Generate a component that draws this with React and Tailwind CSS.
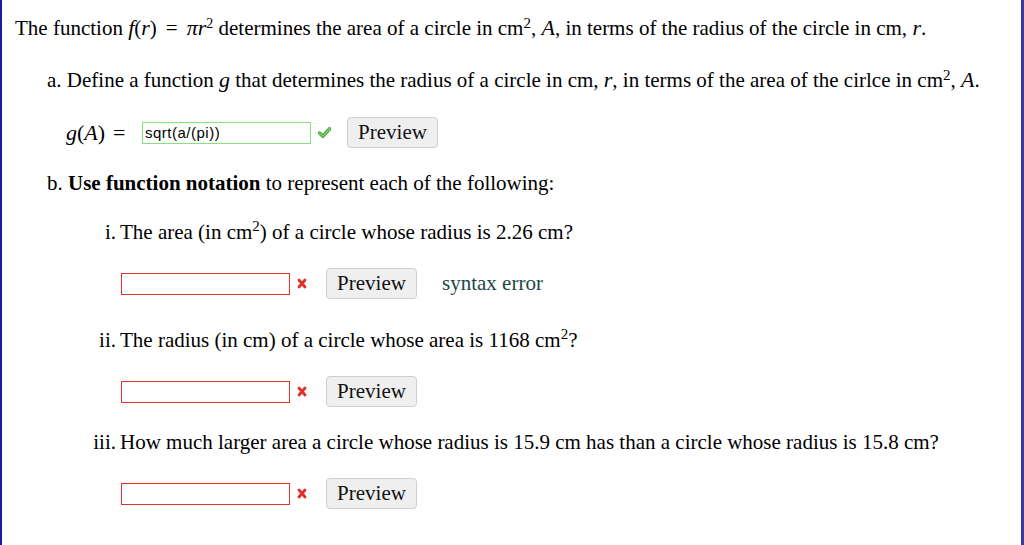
import { useState } from "react";

const serif = { fontFamily: '"Liberation Serif", "Times New Roman", serif' };

function Mi({ children }) {
  return <span className="italic text-[22px]">{children}</span>;
}

function Sup({ children }) {
  return <sup className="text-[15px]">{children}</sup>;
}

function CheckMark() {
  return (
    <svg width="13" height="11" viewBox="0 0 13 11" className="shrink-0">
      <path d="M1.5 6 L5 9.2 L11.5 1.8" fill="none" stroke="#3f8f33" strokeWidth="3.4" strokeLinecap="round" strokeLinejoin="round" />
      <path d="M1.5 6 L5 9.2 L11.5 1.8" fill="none" stroke="#6fd35c" strokeWidth="2" strokeLinecap="round" strokeLinejoin="round" />
    </svg>
  );
}

function CrossMark() {
  return (
    <svg width="10" height="11" viewBox="0 0 10 11" className="shrink-0">
      <path d="M2 2 L8 9 M8 2 L2 9" fill="none" stroke="#e0302a" strokeWidth="2.8" strokeLinecap="round" />
    </svg>
  );
}

function PreviewButton() {
  return (
    <button className="h-[31px] w-[91px] rounded-[4px] border border-[#cfcfcf] bg-[#efefef] text-[21px] text-[#111] leading-none">
      Preview
    </button>
  );
}

function AnswerRow({ ok, value, note }) {
  return (
    <div className="flex items-center h-[31px]">
      <input
        readOnly
        value={value || ""}
        className={
          "h-[22px] w-[169px] px-[2px] text-[15px] tracking-[0.5px] text-black outline-none border " +
          (ok ? "border-[#86e37c]" : "border-[#e3342b]")
        }
        style={{ fontFamily: '"Liberation Sans", Arial, sans-serif' }}
      />
      <div className="w-[36px] flex items-center justify-start pl-[7px]">
        {ok ? <CheckMark /> : <CrossMark />}
      </div>
      <PreviewButton />
      {note && <span className="ml-[25px] text-[#1d4646]">{note}</span>}
    </div>
  );
}

export default function App() {
  const [items] = useState([
    {
      marker: "i.",
      text: (
        <>
          The area (in cm<Sup>2</Sup>) of a circle whose radius is 2.26 cm?
        </>
      ),
      note: "syntax error",
      gap: "mt-0",
    },
    {
      marker: "ii.",
      text: (
        <>
          The radius (in cm) of a circle whose area is 1168 cm<Sup>2</Sup>?
        </>
      ),
      gap: "mt-[30px]",
    },
    {
      marker: "iii.",
      text: <>How much larger area a circle whose radius is 15.9 cm has than a circle whose radius is 15.8 cm?</>,
      gap: "mt-[24px]",
    },
  ]);

  return (
    <div
      className="w-[1024px] h-[545px] bg-white text-black text-[21px] leading-none border-l-2 border-l-[#1b1ba0] border-r-[3px] border-r-[#3a3aa6] overflow-hidden"
      style={serif}
    >
      <div className="pl-[13px] pt-[17px]">
        <p className="h-[22px] flex items-center whitespace-nowrap">
          <span>
            The function <Mi>f</Mi>(<Mi>r</Mi>)<span className="mx-[9px]">=</span><Mi>π</Mi>
            <Mi>r</Mi>
            <sup className="text-[14px]">2</sup> determines the area of a circle in cm<Sup>2</Sup>, <Mi>A</Mi>, in terms of the radius of the circle in cm, <Mi>r</Mi>.
          </span>
        </p>

        <div className="pl-[32px] mt-[30px]">
          <p className="h-[22px] flex items-center whitespace-nowrap">
            <span>
              a. Define a function <Mi>g</Mi> that determines the radius of a circle in cm, <Mi>r</Mi>, in terms of the area of the cirlce in cm
              <Sup>2</Sup>, <Mi>A</Mi>.
            </span>
          </p>

          <div className="flex items-center mt-[26px] pl-[19px]">
            <span className="w-[76px] text-[22px]">
              <Mi>g</Mi>(<Mi>A</Mi>)<span className="ml-[8px]">=</span>
            </span>
            <AnswerRow ok value="sqrt(a/(pi))" />
          </div>

          <p className="h-[22px] flex items-center mt-[24px] whitespace-nowrap">
            <span>
              b. <b>Use function notation</b> to represent each of the following:
            </span>
          </p>

          <div className="mt-[27px] flex flex-col">
            {items.map((it, idx) => (
              <div key={idx} className={it.gap}>
                <p className="h-[22px] flex items-center whitespace-nowrap">
                  <span className="w-[73px] text-right pr-[4px]">{it.marker}</span>
                  <span>{it.text}</span>
                </p>
                <div className="mt-[25px] pl-[74px]">
                  <AnswerRow note={it.note} />
                </div>
              </div>
            ))}
          </div>
        </div>
      </div>
    </div>
  );
}
